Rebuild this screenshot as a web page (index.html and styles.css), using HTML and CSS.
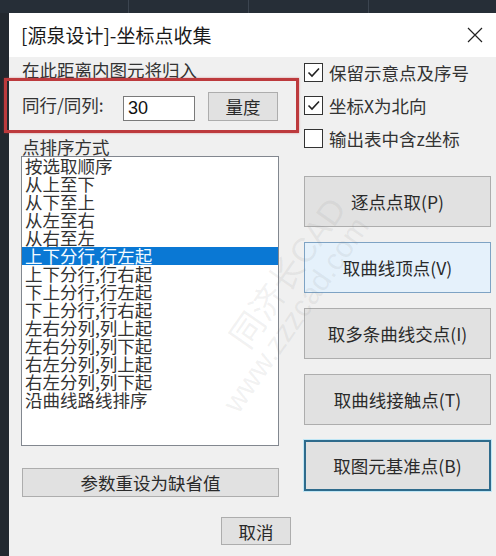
FILE: index.html
```html
<!DOCTYPE html>
<html lang="zh-CN">
<head>
<meta charset="utf-8">
<title>[源泉设计]-坐标点收集</title>
<link rel="stylesheet" href="styles.css">
</head>
<body>
<div class="page">
  <div class="topstrip">
    <span class="sep s1"></span><span class="sep s2"></span><span class="sep s3"></span>
  </div>
  <div class="main">
    <div class="leftstrip"></div>
    <div class="dialog">
      <div class="titlebar">
        <span class="title">[源泉设计]-坐标点收集</span>
        <svg class="close" width="16" height="16" viewBox="0 0 16 16"><path d="M1 1 L15 15 M15 1 L1 15" stroke="#222" stroke-width="1.2" fill="none"/></svg>
      </div>
      <div class="body">
        <div class="col-left">
          <div class="caption">在此距离内图元将归入</div>
          <div class="row">
            <span class="row-label">同行/同列:</span>
            <span class="input">30</span>
            <span class="btn btn-measure">量度</span>
          </div>
          <div class="caption list-caption">点排序方式</div>
          <div class="list">
            <div class="item">按选取顺序</div>
            <div class="item">从上至下</div>
            <div class="item">从下至上</div>
            <div class="item">从左至右</div>
            <div class="item">从右至左</div>
            <div class="item selected">上下分行,行左起</div>
            <div class="item">上下分行,行右起</div>
            <div class="item">下上分行,行左起</div>
            <div class="item">下上分行,行右起</div>
            <div class="item">左右分列,列上起</div>
            <div class="item">左右分列,列下起</div>
            <div class="item">右左分列,列上起</div>
            <div class="item">右左分列,列下起</div>
            <div class="item">沿曲线路线排序</div>
          </div>
          <div class="btn btn-reset">参数重设为缺省值</div>
        </div>
        <div class="col-right">
          <div class="check">
            <span class="box"><svg width="17" height="17" viewBox="0 0 17 17"><path d="M3.5 8.5 L7 12 L14 4.5" stroke="#222" stroke-width="1.6" fill="none"/></svg></span>
            <span>保留示意点及序号</span>
          </div>
          <div class="check">
            <span class="box"><svg width="17" height="17" viewBox="0 0 17 17"><path d="M3.5 8.5 L7 12 L14 4.5" stroke="#222" stroke-width="1.6" fill="none"/></svg></span>
            <span>坐标X为北向</span>
          </div>
          <div class="check">
            <span class="box"></span>
            <span>输出表中含z坐标</span>
          </div>
          <div class="btn big first">逐点点取(P)</div>
          <div class="btn big hover">取曲线顶点(V)</div>
          <div class="btn big">取多条曲线交点(I)</div>
          <div class="btn big">取曲线接触点(T)</div>
          <div class="btn big focused">取图元基准点(B)</div>
        </div>
        <div class="footer">
          <span class="btn btn-cancel">取消</span>
        </div>
      </div>
    </div>
  </div>
  <div class="annot"></div>
  <div class="wm wm1">同济长CAD</div>
  <div class="wm wm2">www.zzzcad.com</div>
</div>
</body>
</html>
```
FILE: styles.css
```css
* { box-sizing: border-box; }
html, body { margin: 0; padding: 0; }
body {
  width: 496px;
  height: 556px;
  overflow: hidden;
  background: #262d35;
  font-family: "Noto Sans CJK SC", "Noto Sans", sans-serif;
  color: #2a2a2a;
}
.page {
  position: relative;
  width: 496px;
  height: 556px;
  overflow: hidden;
}
.topstrip {
  height: 13px;
  background: #262e37;
  display: flex;
}
.sep { display: block; width: 1px; height: 13px; background: #3c4550; }
.s1 { margin-left: 128px; }
.s2 { margin-left: 119px; }
.s3 { margin-left: 119px; }
.main {
  display: flex;
}
.leftstrip {
  width: 9px;
  flex: none;
  background: #22282f;
}
.dialog {
  width: 489px;
  flex: none;
  height: 543px;
  background: #f0f0f0;
}
.titlebar {
  height: 44px;
  background: #ffffff;
  display: flex;
  align-items: center;
  padding-left: 12px;
  padding-right: 14px;
  justify-content: space-between;
}
.title {
  font-size: 19px;
  color: #1a1a1a;
  line-height: 24px;
}
.close { margin-right: 1px; margin-top: 0; }

.body {
  display: grid;
  grid-template-columns: 258px 187px;
  column-gap: 25px;
  padding: 4px 0 0 12px;
  font-size: 17.5px;
}
.col-left { display: flex; flex-direction: column; }
.caption {
  height: 18px;
  line-height: 18px;
  margin-top: 0;
  padding-left: 1px;
  color: #333;
  white-space: nowrap;
}
.row {
  margin-top: 13px;
  height: 29px;
  display: flex;
  align-items: flex-start;
}
.row-label {
  width: 102px;
  padding-left: 1px;
  line-height: 18px;
  margin-top: 4px;
  color: #333;
  white-space: nowrap;
}
.input {
  width: 72px;
  height: 25px;
  margin-top: 4px;
  background: #fff;
  border: 1px solid #7a7a7a;
  font-family: "Liberation Sans", Arial, sans-serif;
  font-size: 18px;
  line-height: 22px;
  padding-left: 4px;
  color: #111;
}
.btn {
  display: flex;
  align-items: center;
  justify-content: center;
  background: #e1e1e1;
  border: 1px solid #adadad;
  color: #2a2a2a;
  white-space: nowrap;
}
.btn-measure {
  width: 70px;
  height: 29px;
  margin-left: 13px;
}
.list-caption { margin-top: 17px; }
.list {
  height: 290px;
  background: #fff;
  border: 1px solid #82878f;
  display: flex;
  flex-direction: column;
  margin-top: 0;
}
.item {
  height: 18px;
  line-height: 18px;
  padding-left: 3px;
  color: #333;
  white-space: nowrap;
}
.item.selected {
  background: #0a78d4;
  color: #f4fbff;
}
.btn-reset {
  margin-top: 22px;
  margin-left: 1px;
  height: 29px;
  width: 257px;
}
.col-right { display: flex; flex-direction: column; }
.check {
  display: flex;
  align-items: center;
  height: 19px;
  margin-top: 14px;
  white-space: nowrap;
  color: #333;
}
.check:first-child { margin-top: 2px; }
.box {
  width: 19px;
  height: 19px;
  border: 1px solid #333;
  background: #fff;
  margin-right: 6px;
  flex: none;
  display: flex;
  align-items: center;
  justify-content: center;
}
.big {
  height: 51px;
  margin-top: 15px;
}
.big.first { margin-top: 28px; }
.big.hover {
  background: #e5f1fb;
  border-color: #7ea3c4;
}
.big.focused {
  border: 2px solid #2e6b8c;
  box-shadow: 0 0 0 1px #bfe6f5;
}
.footer {
  grid-column: 1 / 3;
  margin-top: 20px;
  padding-left: 200px;
  display: flex;
}
.btn-cancel {
  width: 70px;
  height: 28px;
}
.annot {
  position: absolute;
  left: 4px;
  top: 78px;
  width: 295px;
  height: 55px;
  border: 3px solid #bd3a3d;
  box-shadow: 0 0 2px rgba(189, 58, 61, 0.5);
}
.wm {
  position: absolute;
  font-family: "Liberation Sans", "Noto Sans CJK SC", sans-serif;
  color: rgba(120, 120, 120, 0.1);
  white-space: nowrap;
  transform-origin: left center;
  transform: rotate(-55deg);
}
.wm1 { left: 236px; top: 318px; font-size: 34px; }
.wm2 { left: 230px; top: 392px; font-size: 30px; }
```
